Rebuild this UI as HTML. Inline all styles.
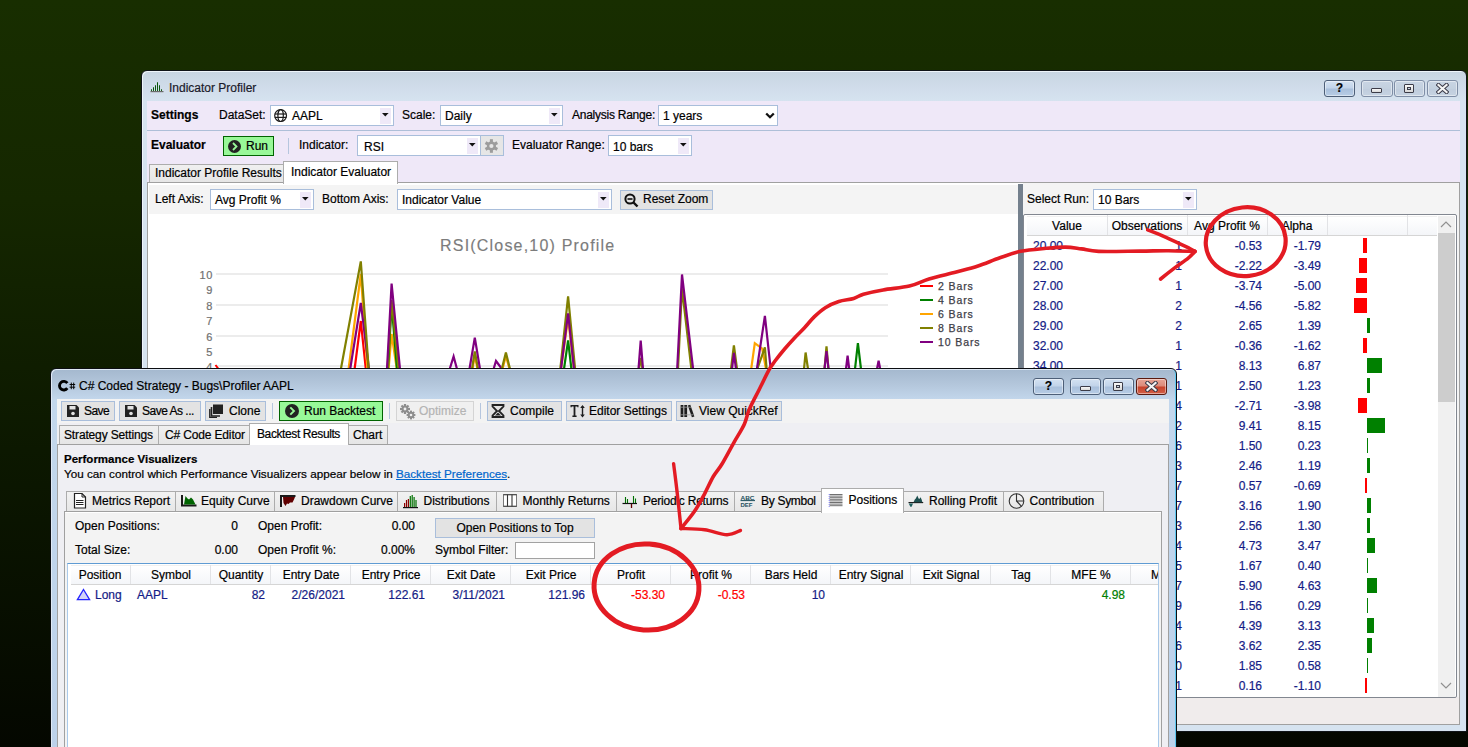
<!DOCTYPE html><html><head><meta charset="utf-8"><style>
html,body{margin:0;padding:0;}
body{width:1468px;height:747px;overflow:hidden;position:relative;background:linear-gradient(#182e00 0px,#152700 200px,#0c1800 450px,#040700 747px);font-family:"Liberation Sans",sans-serif;}
.a{position:absolute;}
.t{white-space:pre;-webkit-text-stroke:0.2px currentColor;}
</style></head><body>
<div class="a" style="left:141px;top:70px;width:1326px;height:662px;box-sizing:border-box;border:1px solid #101418;border-radius:6px 6px 0 0;background:linear-gradient(#c8d5e2 0px,#d0dcea 16px,#d6e3f0 31px,#d6e3f0 100%);box-shadow:inset 1px 1px 0 #eef4fa;"></div>
<svg class="a" style="left:150px;top:81px;" width="14" height="12" viewBox="0 0 14 12"><rect x="1" y="8" width="1" height="2" rx="0.5" fill="#0b560b"/><rect x="3" y="6" width="1" height="4" rx="0.5" fill="#0b560b"/><rect x="5" y="4" width="1" height="6" rx="0.5" fill="#0b560b"/><rect x="7" y="1" width="1" height="9" rx="0.5" fill="#0b560b"/><rect x="9" y="4" width="1" height="6" rx="0.5" fill="#0b560b"/><rect x="11" y="8" width="1" height="2" rx="0.5" fill="#0b560b"/><rect x="0.5" y="10" width="13" height="1.2" fill="#6c6c6c"/></svg>
<div class="a t" style="left:169px;top:81.84px;font-size:12px;line-height:12px;color:#1a1a2a;font-weight:normal;">Indicator Profiler</div>
<div class="a" style="left:1324px;top:80px;width:31px;height:17px;box-sizing:border-box;border:1px solid #4d5f78;border-radius:3px;background:linear-gradient(#d4e2f2 0%,#c2d4ea 45%,#a9c0dc 55%,#b8cde6 100%);box-shadow:inset 0 0 0 1px rgba(255,255,255,0.45);"></div>
<div class="a t" style="left:1324px;width:31px;text-align:center;top:81px;font-size:12px;line-height:15px;font-weight:bold;color:#000;">?</div>
<div class="a" style="left:1361px;top:80px;width:32px;height:17px;box-sizing:border-box;border:1px solid #7f8ea6;border-radius:3px;background:linear-gradient(#c9d5e3 0%,#c3d0df 50%,#c0cddd 55%,#c6d3e2 100%);box-shadow:inset 0 0 0 1px rgba(255,255,255,0.45);"></div>
<div class="a" style="left:1371px;top:88px;width:11px;height:5px;box-sizing:border-box;border:1px solid #3c3c48;background:linear-gradient(#f8f8f8,#d8d8d8);border-radius:1px;"></div>
<div class="a" style="left:1394px;top:80px;width:31px;height:17px;box-sizing:border-box;border:1px solid #7f8ea6;border-radius:3px;background:linear-gradient(#c9d5e3 0%,#c3d0df 50%,#c0cddd 55%,#c6d3e2 100%);box-shadow:inset 0 0 0 1px rgba(255,255,255,0.45);"></div>
<div class="a" style="left:1404px;top:84px;width:10px;height:9px;box-sizing:border-box;border:1.5px solid #3c3c48;background:linear-gradient(#f8f8f8,#d8d8d8);border-radius:1px;"></div>
<div class="a" style="left:1407px;top:87px;width:4px;height:3px;box-sizing:border-box;border:1px solid #3c3c48;background:#c9d6e4;"></div>
<div class="a" style="left:1427px;top:80px;width:31px;height:17px;box-sizing:border-box;border:1px solid #7f8ea6;border-radius:3px;background:linear-gradient(#c9d5e3 0%,#c3d0df 50%,#c0cddd 55%,#c6d3e2 100%);box-shadow:inset 0 0 0 1px rgba(255,255,255,0.45);"></div>
<svg class="a" style="left:1436px;top:83px;" width="13" height="11" viewBox="0 0 13 11"><path d="M2.5 2 L10.5 9 M10.5 2 L2.5 9" stroke="#3a3a48" stroke-width="4.2" stroke-linecap="square"/><path d="M2.5 2 L10.5 9 M10.5 2 L2.5 9" stroke="#f4f4f4" stroke-width="2.2" stroke-linecap="square"/></svg>
<div class="a" style="left:147px;top:101px;width:1313px;height:82px;background:#efe8f8;"></div>
<div class="a" style="left:147px;top:130px;width:1313px;height:1px;background:#aebfd8;"></div>
<div class="a t" style="left:151px;top:108.84px;font-size:12px;line-height:12px;color:#000;font-weight:bold;">Settings</div>
<div class="a t" style="left:219px;top:108.84px;font-size:12px;line-height:12px;color:#000;font-weight:normal;">DataSet:</div>
<div class="a" style="left:270px;top:105px;width:124px;height:21px;box-sizing:border-box;border:1px solid #a9bedb;background:#fff;"></div>
<div class="a" style="left:380px;top:108px;width:11px;height:16px;background:#efe9f8;"></div>
<svg class="a" style="left:382px;top:113px;" width="7" height="4" viewBox="0 0 7 4"><path d="M0 0 L6.6 0 L3.3 3.6 Z" fill="#111"/></svg>
<div class="a t" style="left:292px;top:109.84px;font-size:12px;line-height:12px;color:#000;font-weight:normal;">AAPL</div>
<svg class="a" style="left:274px;top:109px;" width="14" height="14" viewBox="0 0 14 14"><g fill="none" stroke="#1a1a1a" stroke-width="1.2"><circle cx="6.6" cy="6.6" r="5.9"/><ellipse cx="6.6" cy="6.6" rx="2.7" ry="5.9"/><line x1="0.8" y1="5" x2="12.4" y2="5"/><line x1="0.8" y1="8.4" x2="12.4" y2="8.4"/></g></svg>
<div class="a t" style="left:402px;top:108.84px;font-size:12px;line-height:12px;color:#000;font-weight:normal;">Scale:</div>
<div class="a" style="left:440px;top:105px;width:123px;height:21px;box-sizing:border-box;border:1px solid #a9bedb;background:#fff;"></div>
<div class="a" style="left:549px;top:108px;width:11px;height:16px;background:#efe9f8;"></div>
<svg class="a" style="left:551px;top:113px;" width="7" height="4" viewBox="0 0 7 4"><path d="M0 0 L6.6 0 L3.3 3.6 Z" fill="#111"/></svg>
<div class="a t" style="left:445px;top:109.84px;font-size:12px;line-height:12px;color:#000;font-weight:normal;">Daily</div>
<div class="a t" style="left:572px;top:108.84px;font-size:12px;line-height:12px;color:#000;font-weight:normal;letter-spacing:-0.25px;">Analysis Range:</div>
<div class="a" style="left:658px;top:105px;width:120px;height:21px;box-sizing:border-box;border:1px solid #a9bedb;background:#fff;"></div>
<svg class="a" style="left:765px;top:112px;" width="11" height="7" viewBox="0 0 11 7"><path d="M1.2 1.5 L5 5.2 L8.8 1.5" stroke="#111" stroke-width="2.3" fill="none"/></svg>
<div class="a t" style="left:663px;top:109.84px;font-size:12px;line-height:12px;color:#000;font-weight:normal;">1 years</div>
<div class="a t" style="left:151px;top:138.84px;font-size:12px;line-height:12px;color:#000;font-weight:bold;">Evaluator</div>
<div class="a" style="left:223px;top:136px;width:51px;height:20px;box-sizing:border-box;border:1px solid #006400;background:#98f898;"></div>
<svg class="a" style="left:228px;top:140px;" width="13" height="13" viewBox="0 0 13 13"><circle cx="6.5" cy="6.5" r="6.5" fill="#222"/><path d="M5 3 L8.5 6.5 L5 10" stroke="#98f898" stroke-width="1.8" fill="none"/></svg>
<div class="a t" style="left:246px;top:139.84px;font-size:12px;line-height:12px;color:#000;font-weight:normal;">Run</div>
<div class="a" style="left:288px;top:138px;width:1px;height:16px;background:#b6c6de;"></div>
<div class="a t" style="left:299px;top:138.84px;font-size:12px;line-height:12px;color:#000;font-weight:normal;">Indicator:</div>
<div class="a" style="left:357px;top:135px;width:124px;height:21px;box-sizing:border-box;border:1px solid #a9bedb;background:#fff;"></div>
<div class="a" style="left:467px;top:138px;width:11px;height:16px;background:#efe9f8;"></div>
<svg class="a" style="left:469px;top:143px;" width="7" height="4" viewBox="0 0 7 4"><path d="M0 0 L6.6 0 L3.3 3.6 Z" fill="#111"/></svg>
<div class="a t" style="left:364px;top:140.84px;font-size:12px;line-height:12px;color:#000;font-weight:normal;">RSI</div>
<div class="a" style="left:480px;top:135px;width:24px;height:21px;box-sizing:border-box;border:1px solid #a9bedb;background:#e6e6e6;"></div>
<svg class="a" style="left:484px;top:139px;" width="15" height="15" viewBox="0 0 15 15"><g fill="#9c9c9c"><circle cx="7.4" cy="7" r="4.6"/><rect x="5.9" y="0.2" width="3" height="3.6" transform="rotate(0 7.4 7)"/><rect x="5.9" y="0.2" width="3" height="3.6" transform="rotate(60 7.4 7)"/><rect x="5.9" y="0.2" width="3" height="3.6" transform="rotate(120 7.4 7)"/><rect x="5.9" y="0.2" width="3" height="3.6" transform="rotate(180 7.4 7)"/><rect x="5.9" y="0.2" width="3" height="3.6" transform="rotate(240 7.4 7)"/><rect x="5.9" y="0.2" width="3" height="3.6" transform="rotate(300 7.4 7)"/></g><circle cx="7.4" cy="7" r="2.1" fill="#e6e6e6"/></svg>
<div class="a t" style="left:512px;top:138.84px;font-size:12px;line-height:12px;color:#000;font-weight:normal;">Evaluator Range:</div>
<div class="a" style="left:608px;top:135px;width:84px;height:21px;box-sizing:border-box;border:1px solid #a9bedb;background:#fff;"></div>
<div class="a" style="left:678px;top:138px;width:11px;height:16px;background:#efe9f8;"></div>
<svg class="a" style="left:680px;top:143px;" width="7" height="4" viewBox="0 0 7 4"><path d="M0 0 L6.6 0 L3.3 3.6 Z" fill="#111"/></svg>
<div class="a t" style="left:613px;top:140.84px;font-size:12px;line-height:12px;color:#000;font-weight:normal;">10 bars</div>
<div class="a" style="left:149px;top:164px;width:135px;height:19px;box-sizing:border-box;border:1px solid #acacac;border-bottom:none;background:linear-gradient(#f0f0f0,#e5e5e5);"></div>
<div class="a t" style="left:155px;top:166.84px;font-size:12px;line-height:12px;color:#000;font-weight:normal;">Indicator Profile Results</div>
<div class="a" style="left:147px;top:182px;width:1313px;height:543px;box-sizing:border-box;border:1px solid #a0a0a0;background:#fff;"></div>
<div class="a" style="left:283px;top:161px;width:115px;height:23px;box-sizing:border-box;border:1px solid #acacac;border-bottom:none;background:#fff;"></div>
<div class="a t" style="left:291px;top:165.84px;font-size:12px;line-height:12px;color:#000;font-weight:normal;">Indicator Evaluator</div>
<div class="a" style="left:149px;top:185px;width:869px;height:29px;background:#f4f4f4;"></div>
<div class="a t" style="left:155px;top:192.84px;font-size:12px;line-height:12px;color:#000;font-weight:normal;">Left Axis:</div>
<div class="a" style="left:210px;top:189px;width:104px;height:21px;box-sizing:border-box;border:1px solid #a9bedb;background:#fff;"></div>
<div class="a" style="left:300px;top:192px;width:11px;height:16px;background:#efe9f8;"></div>
<svg class="a" style="left:302px;top:197px;" width="7" height="4" viewBox="0 0 7 4"><path d="M0 0 L6.6 0 L3.3 3.6 Z" fill="#111"/></svg>
<div class="a t" style="left:215px;top:193.84px;font-size:12px;line-height:12px;color:#000;font-weight:normal;">Avg Profit %</div>
<div class="a t" style="left:322px;top:192.84px;font-size:12px;line-height:12px;color:#000;font-weight:normal;">Bottom Axis:</div>
<div class="a" style="left:397px;top:189px;width:215px;height:21px;box-sizing:border-box;border:1px solid #a9bedb;background:#fff;"></div>
<div class="a" style="left:598px;top:192px;width:11px;height:16px;background:#efe9f8;"></div>
<svg class="a" style="left:600px;top:197px;" width="7" height="4" viewBox="0 0 7 4"><path d="M0 0 L6.6 0 L3.3 3.6 Z" fill="#111"/></svg>
<div class="a t" style="left:402px;top:193.84px;font-size:12px;line-height:12px;color:#000;font-weight:normal;">Indicator Value</div>
<div class="a" style="left:620px;top:190px;width:93px;height:20px;box-sizing:border-box;border:1px solid #a9bedb;background:#e3e3e3;"></div>
<svg class="a" style="left:624px;top:193px;" width="15" height="15" viewBox="0 0 15 15"><circle cx="6" cy="6" r="4.6" fill="none" stroke="#111" stroke-width="2"/><line x1="3.5" y1="6" x2="8.5" y2="6" stroke="#111" stroke-width="1.6"/><line x1="9.5" y1="9.5" x2="13.5" y2="13.5" stroke="#111" stroke-width="2.4"/></svg>
<div class="a t" style="left:643px;top:192.84px;font-size:12px;line-height:12px;color:#000;font-weight:normal;">Reset Zoom</div>
<div class="a" style="left:440px;top:238px;font-size:16px;line-height:16px;color:#7c7c7c;letter-spacing:1.2px;white-space:pre;-webkit-text-stroke:0.15px #7c7c7c;">RSI(Close,10) Profile</div>
<div class="a" style="left:216px;top:365px;width:672px;height:2px;background:#ececec;"></div>
<div class="a t" style="left:-187px;width:400px;text-align:right;top:361.69px;font-size:11px;line-height:11px;color:#707070;font-weight:normal;letter-spacing:0.6px;">4</div>
<div class="a t" style="left:-187px;width:400px;text-align:right;top:346.69px;font-size:11px;line-height:11px;color:#707070;font-weight:normal;letter-spacing:0.6px;">5</div>
<div class="a" style="left:216px;top:335px;width:672px;height:2px;background:#ececec;"></div>
<div class="a t" style="left:-187px;width:400px;text-align:right;top:331.69px;font-size:11px;line-height:11px;color:#707070;font-weight:normal;letter-spacing:0.6px;">6</div>
<div class="a t" style="left:-187px;width:400px;text-align:right;top:315.69px;font-size:11px;line-height:11px;color:#707070;font-weight:normal;letter-spacing:0.6px;">7</div>
<div class="a" style="left:216px;top:304px;width:672px;height:2px;background:#ececec;"></div>
<div class="a t" style="left:-187px;width:400px;text-align:right;top:300.69px;font-size:11px;line-height:11px;color:#707070;font-weight:normal;letter-spacing:0.6px;">8</div>
<div class="a t" style="left:-187px;width:400px;text-align:right;top:284.69px;font-size:11px;line-height:11px;color:#707070;font-weight:normal;letter-spacing:0.6px;">9</div>
<div class="a" style="left:216px;top:273px;width:672px;height:2px;background:#ececec;"></div>
<div class="a t" style="left:-187px;width:400px;text-align:right;top:269.69px;font-size:11px;line-height:11px;color:#707070;font-weight:normal;letter-spacing:0.6px;">10</div>
<svg class="a" style="left:0;top:0" width="1468" height="747"><polyline points="354.6,369 360.8,321 365.8,369" fill="none" stroke="#ff0000" stroke-width="2.2" stroke-linejoin="miter"/><polyline points="348.6,369 360.8,274 367.4,369" fill="none" stroke="#ffa500" stroke-width="2.2" stroke-linejoin="miter"/><polyline points="350.2,369 360.8,303 369,369" fill="none" stroke="#800080" stroke-width="2.2" stroke-linejoin="miter"/><polyline points="340.9,369 360.8,261.4 368.7,369" fill="none" stroke="#808000" stroke-width="2.2" stroke-linejoin="miter"/><polyline points="388.6,369 391.6,334 396.8,369" fill="none" stroke="#ffa500" stroke-width="2.2" stroke-linejoin="miter"/><polyline points="388,369 391.6,304 397,369" fill="none" stroke="#008000" stroke-width="2.2" stroke-linejoin="miter"/><polyline points="387.5,369 391.6,300 398.5,369" fill="none" stroke="#808000" stroke-width="2.2" stroke-linejoin="miter"/><polyline points="387,369 391.6,283.5 400,369" fill="none" stroke="#800080" stroke-width="2.2" stroke-linejoin="miter"/><polyline points="449.7,369 453.6,356.4 457,369" fill="none" stroke="#800080" stroke-width="2.2" stroke-linejoin="miter"/><polyline points="472.5,369 474.8,355 477.5,369" fill="none" stroke="#ffa500" stroke-width="2.2" stroke-linejoin="miter"/><polyline points="472,369 474.8,351.5 478,369" fill="none" stroke="#808000" stroke-width="2.2" stroke-linejoin="miter"/><polyline points="469.5,369 474.8,337.6 480,369" fill="none" stroke="#800080" stroke-width="2.2" stroke-linejoin="miter"/><polyline points="493.6,369 496,361 502,369" fill="none" stroke="#800080" stroke-width="2.2"/><polyline points="502.5,369 505.9,356 509.5,369" fill="none" stroke="#ffa500" stroke-width="2.2" stroke-linejoin="miter"/><polyline points="501.8,369 505.9,352.5 510,369" fill="none" stroke="#808000" stroke-width="2.2" stroke-linejoin="miter"/><polyline points="561,369 568.1,318 574,369" fill="none" stroke="#ffa500" stroke-width="2.2" stroke-linejoin="miter"/><polyline points="560.3,369 568.1,296.3 575.1,369" fill="none" stroke="#808000" stroke-width="2.2" stroke-linejoin="miter"/><polyline points="561,369 568.1,313.3 574,369" fill="none" stroke="#800080" stroke-width="2.2" stroke-linejoin="miter"/><polyline points="564,369 568.1,340.4 571.4,369" fill="none" stroke="#008000" stroke-width="2.2" stroke-linejoin="miter"/><polyline points="639,369 640.7,358 642.5,369" fill="none" stroke="#808000" stroke-width="2.2" stroke-linejoin="miter"/><polyline points="638.5,369 640.7,340.5 643,369" fill="none" stroke="#800080" stroke-width="2.2" stroke-linejoin="miter"/><polyline points="678,369 682,288.3 691.4,369" fill="none" stroke="#808000" stroke-width="2.2" stroke-linejoin="miter"/><polyline points="677.2,369 682,274.5 693.1,369" fill="none" stroke="#800080" stroke-width="2.2" stroke-linejoin="miter"/><polyline points="731,369 733.9,345.4 737,369" fill="none" stroke="#808000" stroke-width="2.2" stroke-linejoin="miter"/><polyline points="732,369 733.9,353 736,369" fill="none" stroke="#800080" stroke-width="2.2" stroke-linejoin="miter"/><polyline points="751.2,369 754.8,343.2 762.2,348.6 766,369" fill="none" stroke="#ffa500" stroke-width="2.2"/><polyline points="757.3,369 764.9,347.3 766.6,369" fill="none" stroke="#808000" stroke-width="2.2" stroke-linejoin="miter"/><polyline points="756.9,369 764.9,315.8 770.7,369" fill="none" stroke="#800080" stroke-width="2.2" stroke-linejoin="miter"/><polyline points="804,369 805.6,352.5 808,369" fill="none" stroke="#808000" stroke-width="2.2" stroke-linejoin="miter"/><polyline points="824.5,369 826.5,346.4 828.5,369" fill="none" stroke="#808000" stroke-width="2.2" stroke-linejoin="miter"/><polyline points="824.5,369 826.5,351.2 828.5,369" fill="none" stroke="#800080" stroke-width="2.2" stroke-linejoin="miter"/><polyline points="846,369 847.6,355.6 849.2,369" fill="none" stroke="#800080" stroke-width="2.2" stroke-linejoin="miter"/><polyline points="855,369 857.9,343.2 861,369" fill="none" stroke="#008000" stroke-width="2.2" stroke-linejoin="miter"/><polyline points="877,369 878.6,360.6 880.2,369" fill="none" stroke="#800080" stroke-width="2.2" stroke-linejoin="miter"/><polyline points="215.5,365 218.5,369" fill="none" stroke="#ff0000" stroke-width="2"/></svg>
<div class="a" style="left:920px;top:285px;width:13px;height:2px;background:#ff0000;"></div>
<div class="a t" style="left:938px;top:281.11px;font-size:10.5px;line-height:10.5px;color:#404048;font-weight:normal;letter-spacing:0.9px;-webkit-text-stroke:0.25px #404048;">2 Bars</div>
<div class="a" style="left:920px;top:299px;width:13px;height:2px;background:#008000;"></div>
<div class="a t" style="left:938px;top:295.11px;font-size:10.5px;line-height:10.5px;color:#404048;font-weight:normal;letter-spacing:0.9px;-webkit-text-stroke:0.25px #404048;">4 Bars</div>
<div class="a" style="left:920px;top:313px;width:13px;height:2px;background:#ffa500;"></div>
<div class="a t" style="left:938px;top:309.11px;font-size:10.5px;line-height:10.5px;color:#404048;font-weight:normal;letter-spacing:0.9px;-webkit-text-stroke:0.25px #404048;">6 Bars</div>
<div class="a" style="left:920px;top:327px;width:13px;height:2px;background:#808000;"></div>
<div class="a t" style="left:938px;top:323.11px;font-size:10.5px;line-height:10.5px;color:#404048;font-weight:normal;letter-spacing:0.9px;-webkit-text-stroke:0.25px #404048;">8 Bars</div>
<div class="a" style="left:920px;top:341px;width:13px;height:2px;background:#800080;"></div>
<div class="a t" style="left:938px;top:337.11px;font-size:10.5px;line-height:10.5px;color:#404048;font-weight:normal;letter-spacing:0.9px;-webkit-text-stroke:0.25px #404048;">10 Bars</div>
<div class="a" style="left:1018px;top:184px;width:5px;height:540px;background:#74808d;"></div>
<div class="a" style="left:1023px;top:183px;width:436px;height:541px;background:#f4f4f4;"></div>
<div class="a" style="left:1023px;top:697px;width:436px;height:27px;background:#f0ecec;"></div>
<div class="a t" style="left:1027px;top:192.84px;font-size:12px;line-height:12px;color:#000;font-weight:normal;">Select Run:</div>
<div class="a" style="left:1093px;top:189px;width:104px;height:21px;box-sizing:border-box;border:1px solid #a9bedb;background:#fff;"></div>
<div class="a" style="left:1183px;top:192px;width:11px;height:16px;background:#efe9f8;"></div>
<svg class="a" style="left:1185px;top:197px;" width="7" height="4" viewBox="0 0 7 4"><path d="M0 0 L6.6 0 L3.3 3.6 Z" fill="#111"/></svg>
<div class="a t" style="left:1098px;top:193.84px;font-size:12px;line-height:12px;color:#000;font-weight:normal;">10 Bars</div>
<div class="a" style="left:1023px;top:214px;width:434px;height:484px;box-sizing:border-box;border:1px solid #828790;background:#fff;border-radius:2px;"></div>
<div class="a" style="left:1027px;top:216px;width:410px;height:20px;background:linear-gradient(#ffffff,#f3f5f8);border-top:1px solid #f0f0f0;box-sizing:border-box;"></div>
<div class="a" style="left:1027px;top:235px;width:410px;height:1px;background:#d5d5d5;"></div>
<div class="a" style="left:1107px;top:215px;width:1px;height:20px;background:#e2e3e6;"></div>
<div class="a" style="left:1187px;top:215px;width:1px;height:20px;background:#e2e3e6;"></div>
<div class="a" style="left:1267px;top:215px;width:1px;height:20px;background:#e2e3e6;"></div>
<div class="a" style="left:1327px;top:215px;width:1px;height:20px;background:#e2e3e6;"></div>
<div class="a" style="left:1407px;top:215px;width:1px;height:20px;background:#e2e3e6;"></div>
<div class="a t" style="left:767px;width:600px;text-align:center;top:219.84px;font-size:12px;line-height:12px;color:#000;font-weight:normal;">Value</div>
<div class="a t" style="left:847px;width:600px;text-align:center;top:219.84px;font-size:12px;line-height:12px;color:#000;font-weight:normal;">Observations</div>
<div class="a t" style="left:927px;width:600px;text-align:center;top:219.84px;font-size:12px;line-height:12px;color:#000;font-weight:normal;">Avg Profit %</div>
<div class="a t" style="left:997px;width:600px;text-align:center;top:219.84px;font-size:12px;line-height:12px;color:#000;font-weight:normal;">Alpha</div>
<div class="a" style="left:1438px;top:216px;width:17px;height:481px;background:#f0f0f0;"></div>
<div class="a" style="left:1438px;top:233px;width:17px;height:169px;background:#cdcdcd;"></div>
<svg class="a" style="left:1440px;top:220px;" width="12" height="8" viewBox="0 0 12 8"><path d="M1 7 L6 2 L11 7" stroke="#909090" stroke-width="1.2" fill="none"/></svg>
<svg class="a" style="left:1440px;top:682px;" width="12" height="8" viewBox="0 0 12 8"><path d="M1 1 L6 6 L11 1" stroke="#909090" stroke-width="1.2" fill="none"/></svg>
<div class="a t" style="left:1033px;top:239.84px;font-size:12px;line-height:12px;color:#141c86;font-weight:normal;">20.00</div>
<div class="a t" style="left:782px;width:400px;text-align:right;top:239.84px;font-size:12px;line-height:12px;color:#141c86;font-weight:normal;">1</div>
<div class="a t" style="left:862px;width:400px;text-align:right;top:239.84px;font-size:12px;line-height:12px;color:#141c86;font-weight:normal;">-0.53</div>
<div class="a t" style="left:921px;width:400px;text-align:right;top:239.84px;font-size:12px;line-height:12px;color:#141c86;font-weight:normal;">-1.79</div>
<div class="a" style="left:1363px;top:238px;width:4px;height:15px;background:#ff0000;"></div>
<div class="a t" style="left:1033px;top:259.84px;font-size:12px;line-height:12px;color:#141c86;font-weight:normal;">22.00</div>
<div class="a t" style="left:782px;width:400px;text-align:right;top:259.84px;font-size:12px;line-height:12px;color:#141c86;font-weight:normal;">1</div>
<div class="a t" style="left:862px;width:400px;text-align:right;top:259.84px;font-size:12px;line-height:12px;color:#141c86;font-weight:normal;">-2.22</div>
<div class="a t" style="left:921px;width:400px;text-align:right;top:259.84px;font-size:12px;line-height:12px;color:#141c86;font-weight:normal;">-3.49</div>
<div class="a" style="left:1359px;top:258px;width:8px;height:15px;background:#ff0000;"></div>
<div class="a t" style="left:1033px;top:279.84px;font-size:12px;line-height:12px;color:#141c86;font-weight:normal;">27.00</div>
<div class="a t" style="left:782px;width:400px;text-align:right;top:279.84px;font-size:12px;line-height:12px;color:#141c86;font-weight:normal;">1</div>
<div class="a t" style="left:862px;width:400px;text-align:right;top:279.84px;font-size:12px;line-height:12px;color:#141c86;font-weight:normal;">-3.74</div>
<div class="a t" style="left:921px;width:400px;text-align:right;top:279.84px;font-size:12px;line-height:12px;color:#141c86;font-weight:normal;">-5.00</div>
<div class="a" style="left:1356px;top:278px;width:11px;height:15px;background:#ff0000;"></div>
<div class="a t" style="left:1033px;top:299.84px;font-size:12px;line-height:12px;color:#141c86;font-weight:normal;">28.00</div>
<div class="a t" style="left:782px;width:400px;text-align:right;top:299.84px;font-size:12px;line-height:12px;color:#141c86;font-weight:normal;">2</div>
<div class="a t" style="left:862px;width:400px;text-align:right;top:299.84px;font-size:12px;line-height:12px;color:#141c86;font-weight:normal;">-4.56</div>
<div class="a t" style="left:921px;width:400px;text-align:right;top:299.84px;font-size:12px;line-height:12px;color:#141c86;font-weight:normal;">-5.82</div>
<div class="a" style="left:1354px;top:298px;width:13px;height:15px;background:#ff0000;"></div>
<div class="a t" style="left:1033px;top:319.84px;font-size:12px;line-height:12px;color:#141c86;font-weight:normal;">29.00</div>
<div class="a t" style="left:782px;width:400px;text-align:right;top:319.84px;font-size:12px;line-height:12px;color:#141c86;font-weight:normal;">2</div>
<div class="a t" style="left:862px;width:400px;text-align:right;top:319.84px;font-size:12px;line-height:12px;color:#141c86;font-weight:normal;">2.65</div>
<div class="a t" style="left:921px;width:400px;text-align:right;top:319.84px;font-size:12px;line-height:12px;color:#141c86;font-weight:normal;">1.39</div>
<div class="a" style="left:1367px;top:318px;width:3px;height:15px;background:#008000;"></div>
<div class="a t" style="left:1033px;top:339.84px;font-size:12px;line-height:12px;color:#141c86;font-weight:normal;">32.00</div>
<div class="a t" style="left:782px;width:400px;text-align:right;top:339.84px;font-size:12px;line-height:12px;color:#141c86;font-weight:normal;">1</div>
<div class="a t" style="left:862px;width:400px;text-align:right;top:339.84px;font-size:12px;line-height:12px;color:#141c86;font-weight:normal;">-0.36</div>
<div class="a t" style="left:921px;width:400px;text-align:right;top:339.84px;font-size:12px;line-height:12px;color:#141c86;font-weight:normal;">-1.62</div>
<div class="a" style="left:1363px;top:338px;width:4px;height:15px;background:#ff0000;"></div>
<div class="a t" style="left:1033px;top:359.84px;font-size:12px;line-height:12px;color:#141c86;font-weight:normal;">34.00</div>
<div class="a t" style="left:782px;width:400px;text-align:right;top:359.84px;font-size:12px;line-height:12px;color:#141c86;font-weight:normal;">1</div>
<div class="a t" style="left:862px;width:400px;text-align:right;top:359.84px;font-size:12px;line-height:12px;color:#141c86;font-weight:normal;">8.13</div>
<div class="a t" style="left:921px;width:400px;text-align:right;top:359.84px;font-size:12px;line-height:12px;color:#141c86;font-weight:normal;">6.87</div>
<div class="a" style="left:1367px;top:358px;width:15px;height:15px;background:#008000;"></div>
<div class="a t" style="left:1033px;top:379.84px;font-size:12px;line-height:12px;color:#141c86;font-weight:normal;">35.00</div>
<div class="a t" style="left:782px;width:400px;text-align:right;top:379.84px;font-size:12px;line-height:12px;color:#141c86;font-weight:normal;">1</div>
<div class="a t" style="left:862px;width:400px;text-align:right;top:379.84px;font-size:12px;line-height:12px;color:#141c86;font-weight:normal;">2.50</div>
<div class="a t" style="left:921px;width:400px;text-align:right;top:379.84px;font-size:12px;line-height:12px;color:#141c86;font-weight:normal;">1.23</div>
<div class="a" style="left:1367px;top:378px;width:3px;height:15px;background:#008000;"></div>
<div class="a t" style="left:1033px;top:399.84px;font-size:12px;line-height:12px;color:#141c86;font-weight:normal;">36.00</div>
<div class="a t" style="left:782px;width:400px;text-align:right;top:399.84px;font-size:12px;line-height:12px;color:#141c86;font-weight:normal;">4</div>
<div class="a t" style="left:862px;width:400px;text-align:right;top:399.84px;font-size:12px;line-height:12px;color:#141c86;font-weight:normal;">-2.71</div>
<div class="a t" style="left:921px;width:400px;text-align:right;top:399.84px;font-size:12px;line-height:12px;color:#141c86;font-weight:normal;">-3.98</div>
<div class="a" style="left:1358px;top:398px;width:9px;height:15px;background:#ff0000;"></div>
<div class="a t" style="left:1033px;top:419.84px;font-size:12px;line-height:12px;color:#141c86;font-weight:normal;">37.00</div>
<div class="a t" style="left:782px;width:400px;text-align:right;top:419.84px;font-size:12px;line-height:12px;color:#141c86;font-weight:normal;">2</div>
<div class="a t" style="left:862px;width:400px;text-align:right;top:419.84px;font-size:12px;line-height:12px;color:#141c86;font-weight:normal;">9.41</div>
<div class="a t" style="left:921px;width:400px;text-align:right;top:419.84px;font-size:12px;line-height:12px;color:#141c86;font-weight:normal;">8.15</div>
<div class="a" style="left:1367px;top:418px;width:18px;height:15px;background:#008000;"></div>
<div class="a t" style="left:1033px;top:439.84px;font-size:12px;line-height:12px;color:#141c86;font-weight:normal;">38.00</div>
<div class="a t" style="left:782px;width:400px;text-align:right;top:439.84px;font-size:12px;line-height:12px;color:#141c86;font-weight:normal;">6</div>
<div class="a t" style="left:862px;width:400px;text-align:right;top:439.84px;font-size:12px;line-height:12px;color:#141c86;font-weight:normal;">1.50</div>
<div class="a t" style="left:921px;width:400px;text-align:right;top:439.84px;font-size:12px;line-height:12px;color:#141c86;font-weight:normal;">0.23</div>
<div class="a" style="left:1367px;top:438px;width:1px;height:15px;background:#008000;"></div>
<div class="a t" style="left:1033px;top:459.84px;font-size:12px;line-height:12px;color:#141c86;font-weight:normal;">39.00</div>
<div class="a t" style="left:782px;width:400px;text-align:right;top:459.84px;font-size:12px;line-height:12px;color:#141c86;font-weight:normal;">3</div>
<div class="a t" style="left:862px;width:400px;text-align:right;top:459.84px;font-size:12px;line-height:12px;color:#141c86;font-weight:normal;">2.46</div>
<div class="a t" style="left:921px;width:400px;text-align:right;top:459.84px;font-size:12px;line-height:12px;color:#141c86;font-weight:normal;">1.19</div>
<div class="a" style="left:1367px;top:458px;width:3px;height:15px;background:#008000;"></div>
<div class="a t" style="left:1033px;top:479.84px;font-size:12px;line-height:12px;color:#141c86;font-weight:normal;">40.00</div>
<div class="a t" style="left:782px;width:400px;text-align:right;top:479.84px;font-size:12px;line-height:12px;color:#141c86;font-weight:normal;">7</div>
<div class="a t" style="left:862px;width:400px;text-align:right;top:479.84px;font-size:12px;line-height:12px;color:#141c86;font-weight:normal;">0.57</div>
<div class="a t" style="left:921px;width:400px;text-align:right;top:479.84px;font-size:12px;line-height:12px;color:#141c86;font-weight:normal;">-0.69</div>
<div class="a" style="left:1365px;top:478px;width:2px;height:15px;background:#ff0000;"></div>
<div class="a t" style="left:1033px;top:499.84px;font-size:12px;line-height:12px;color:#141c86;font-weight:normal;">41.00</div>
<div class="a t" style="left:782px;width:400px;text-align:right;top:499.84px;font-size:12px;line-height:12px;color:#141c86;font-weight:normal;">7</div>
<div class="a t" style="left:862px;width:400px;text-align:right;top:499.84px;font-size:12px;line-height:12px;color:#141c86;font-weight:normal;">3.16</div>
<div class="a t" style="left:921px;width:400px;text-align:right;top:499.84px;font-size:12px;line-height:12px;color:#141c86;font-weight:normal;">1.90</div>
<div class="a" style="left:1367px;top:498px;width:4px;height:15px;background:#008000;"></div>
<div class="a t" style="left:1033px;top:519.84px;font-size:12px;line-height:12px;color:#141c86;font-weight:normal;">42.00</div>
<div class="a t" style="left:782px;width:400px;text-align:right;top:519.84px;font-size:12px;line-height:12px;color:#141c86;font-weight:normal;">3</div>
<div class="a t" style="left:862px;width:400px;text-align:right;top:519.84px;font-size:12px;line-height:12px;color:#141c86;font-weight:normal;">2.56</div>
<div class="a t" style="left:921px;width:400px;text-align:right;top:519.84px;font-size:12px;line-height:12px;color:#141c86;font-weight:normal;">1.30</div>
<div class="a" style="left:1367px;top:518px;width:3px;height:15px;background:#008000;"></div>
<div class="a t" style="left:1033px;top:539.84px;font-size:12px;line-height:12px;color:#141c86;font-weight:normal;">43.00</div>
<div class="a t" style="left:782px;width:400px;text-align:right;top:539.84px;font-size:12px;line-height:12px;color:#141c86;font-weight:normal;">4</div>
<div class="a t" style="left:862px;width:400px;text-align:right;top:539.84px;font-size:12px;line-height:12px;color:#141c86;font-weight:normal;">4.73</div>
<div class="a t" style="left:921px;width:400px;text-align:right;top:539.84px;font-size:12px;line-height:12px;color:#141c86;font-weight:normal;">3.47</div>
<div class="a" style="left:1367px;top:538px;width:8px;height:15px;background:#008000;"></div>
<div class="a t" style="left:1033px;top:559.84px;font-size:12px;line-height:12px;color:#141c86;font-weight:normal;">44.00</div>
<div class="a t" style="left:782px;width:400px;text-align:right;top:559.84px;font-size:12px;line-height:12px;color:#141c86;font-weight:normal;">5</div>
<div class="a t" style="left:862px;width:400px;text-align:right;top:559.84px;font-size:12px;line-height:12px;color:#141c86;font-weight:normal;">1.67</div>
<div class="a t" style="left:921px;width:400px;text-align:right;top:559.84px;font-size:12px;line-height:12px;color:#141c86;font-weight:normal;">0.40</div>
<div class="a" style="left:1367px;top:558px;width:1px;height:15px;background:#008000;"></div>
<div class="a t" style="left:1033px;top:579.84px;font-size:12px;line-height:12px;color:#141c86;font-weight:normal;">45.00</div>
<div class="a t" style="left:782px;width:400px;text-align:right;top:579.84px;font-size:12px;line-height:12px;color:#141c86;font-weight:normal;">7</div>
<div class="a t" style="left:862px;width:400px;text-align:right;top:579.84px;font-size:12px;line-height:12px;color:#141c86;font-weight:normal;">5.90</div>
<div class="a t" style="left:921px;width:400px;text-align:right;top:579.84px;font-size:12px;line-height:12px;color:#141c86;font-weight:normal;">4.63</div>
<div class="a" style="left:1367px;top:578px;width:10px;height:15px;background:#008000;"></div>
<div class="a t" style="left:1033px;top:599.84px;font-size:12px;line-height:12px;color:#141c86;font-weight:normal;">46.00</div>
<div class="a t" style="left:782px;width:400px;text-align:right;top:599.84px;font-size:12px;line-height:12px;color:#141c86;font-weight:normal;">9</div>
<div class="a t" style="left:862px;width:400px;text-align:right;top:599.84px;font-size:12px;line-height:12px;color:#141c86;font-weight:normal;">1.56</div>
<div class="a t" style="left:921px;width:400px;text-align:right;top:599.84px;font-size:12px;line-height:12px;color:#141c86;font-weight:normal;">0.29</div>
<div class="a" style="left:1367px;top:598px;width:1px;height:15px;background:#008000;"></div>
<div class="a t" style="left:1033px;top:619.84px;font-size:12px;line-height:12px;color:#141c86;font-weight:normal;">47.00</div>
<div class="a t" style="left:782px;width:400px;text-align:right;top:619.84px;font-size:12px;line-height:12px;color:#141c86;font-weight:normal;">4</div>
<div class="a t" style="left:862px;width:400px;text-align:right;top:619.84px;font-size:12px;line-height:12px;color:#141c86;font-weight:normal;">4.39</div>
<div class="a t" style="left:921px;width:400px;text-align:right;top:619.84px;font-size:12px;line-height:12px;color:#141c86;font-weight:normal;">3.13</div>
<div class="a" style="left:1367px;top:618px;width:7px;height:15px;background:#008000;"></div>
<div class="a t" style="left:1033px;top:639.84px;font-size:12px;line-height:12px;color:#141c86;font-weight:normal;">48.00</div>
<div class="a t" style="left:782px;width:400px;text-align:right;top:639.84px;font-size:12px;line-height:12px;color:#141c86;font-weight:normal;">6</div>
<div class="a t" style="left:862px;width:400px;text-align:right;top:639.84px;font-size:12px;line-height:12px;color:#141c86;font-weight:normal;">3.62</div>
<div class="a t" style="left:921px;width:400px;text-align:right;top:639.84px;font-size:12px;line-height:12px;color:#141c86;font-weight:normal;">2.35</div>
<div class="a" style="left:1367px;top:638px;width:5px;height:15px;background:#008000;"></div>
<div class="a t" style="left:1033px;top:659.84px;font-size:12px;line-height:12px;color:#141c86;font-weight:normal;">49.00</div>
<div class="a t" style="left:782px;width:400px;text-align:right;top:659.84px;font-size:12px;line-height:12px;color:#141c86;font-weight:normal;">0</div>
<div class="a t" style="left:862px;width:400px;text-align:right;top:659.84px;font-size:12px;line-height:12px;color:#141c86;font-weight:normal;">1.85</div>
<div class="a t" style="left:921px;width:400px;text-align:right;top:659.84px;font-size:12px;line-height:12px;color:#141c86;font-weight:normal;">0.58</div>
<div class="a" style="left:1367px;top:658px;width:1px;height:15px;background:#008000;"></div>
<div class="a t" style="left:1033px;top:679.84px;font-size:12px;line-height:12px;color:#141c86;font-weight:normal;">50.00</div>
<div class="a t" style="left:782px;width:400px;text-align:right;top:679.84px;font-size:12px;line-height:12px;color:#141c86;font-weight:normal;">1</div>
<div class="a t" style="left:862px;width:400px;text-align:right;top:679.84px;font-size:12px;line-height:12px;color:#141c86;font-weight:normal;">0.16</div>
<div class="a t" style="left:921px;width:400px;text-align:right;top:679.84px;font-size:12px;line-height:12px;color:#141c86;font-weight:normal;">-1.10</div>
<div class="a" style="left:1365px;top:678px;width:2px;height:15px;background:#ff0000;"></div>
<div class="a" style="left:50px;top:368px;width:1127px;height:400px;box-sizing:border-box;border:1px solid #0c0e12;border-radius:6px 6px 0 0;background:linear-gradient(#a4b8ce 0px,#b3c6db 15px,#c3d7ec 31px,#bcd1ea 100%);box-shadow:inset 1px 1px 0 #dfe9f5, inset -1px 0 0 #5ec8f0;"></div>
<svg class="a" style="left:57px;top:379px;" width="20" height="14" viewBox="0 0 20 14"><path d="M10.3 4.2 A4.3 4.3 0 1 0 10.3 9.2" fill="none" stroke="#000" stroke-width="2.9"/><path d="M14.3 3.6 V10.2 M16.7 3.6 V10.2 M12.6 5.5 H18.2 M12.6 8.2 H18.2" stroke="#000" stroke-width="0.95"/></svg>
<div class="a t" style="left:79px;top:379.84px;font-size:12px;line-height:12px;color:#000;font-weight:normal;">C# Coded Strategy - Bugs\Profiler AAPL</div>
<div class="a" style="left:1033px;top:378px;width:31px;height:17px;box-sizing:border-box;border:1px solid #4d5f78;border-radius:3px;background:linear-gradient(#d4e2f2 0%,#c2d4ea 45%,#a9c0dc 55%,#b8cde6 100%);box-shadow:inset 0 0 0 1px rgba(255,255,255,0.45);"></div>
<div class="a t" style="left:1033px;width:31px;text-align:center;top:379px;font-size:12px;line-height:15px;font-weight:bold;color:#000;">?</div>
<div class="a" style="left:1070px;top:378px;width:31px;height:17px;box-sizing:border-box;border:1px solid #4d5f78;border-radius:3px;background:linear-gradient(#d4e2f2 0%,#c2d4ea 45%,#a9c0dc 55%,#b8cde6 100%);box-shadow:inset 0 0 0 1px rgba(255,255,255,0.45);"></div>
<div class="a" style="left:1080px;top:386px;width:11px;height:5px;box-sizing:border-box;border:1px solid #3c3c48;background:linear-gradient(#f8f8f8,#d8d8d8);border-radius:1px;"></div>
<div class="a" style="left:1103px;top:378px;width:31px;height:17px;box-sizing:border-box;border:1px solid #4d5f78;border-radius:3px;background:linear-gradient(#d4e2f2 0%,#c2d4ea 45%,#a9c0dc 55%,#b8cde6 100%);box-shadow:inset 0 0 0 1px rgba(255,255,255,0.45);"></div>
<div class="a" style="left:1113px;top:382px;width:10px;height:9px;box-sizing:border-box;border:1.5px solid #3c3c48;background:linear-gradient(#f8f8f8,#d8d8d8);border-radius:1px;"></div>
<div class="a" style="left:1116px;top:385px;width:4px;height:3px;box-sizing:border-box;border:1px solid #3c3c48;background:#c9d6e4;"></div>
<div class="a" style="left:1136px;top:378px;width:31px;height:17px;box-sizing:border-box;border:1px solid #5a1a10;border-radius:3px;background:linear-gradient(#e8a496 0%,#dc8b7b 45%,#c8432c 55%,#d26048 100%);box-shadow:inset 0 0 0 1px rgba(255,255,255,0.45);"></div>
<svg class="a" style="left:1145px;top:381px;" width="13" height="11" viewBox="0 0 13 11"><path d="M2.5 2 L10.5 9 M10.5 2 L2.5 9" stroke="#3a3a48" stroke-width="4.2" stroke-linecap="square"/><path d="M2.5 2 L10.5 9 M10.5 2 L2.5 9" stroke="#f4f4f4" stroke-width="2.2" stroke-linecap="square"/></svg>
<div class="a" style="left:57px;top:399px;width:1112px;height:400px;background:#efeff3;"></div>
<div class="a" style="left:57px;top:399px;width:1112px;height:24px;background:#f3f3f3;"></div>
<div class="a" style="left:61px;top:401px;width:54px;height:20px;box-sizing:border-box;border:1px solid #a9bedb;background:#e3e3e3;"></div>
<svg class="a" style="left:66px;top:404px" width="14" height="14" viewBox="0 0 14 14"><path d="M1 1 H10.5 L13 3.5 V13 H1 Z" fill="#222"/><rect x="3.5" y="2" width="6" height="3.5" fill="#e3e3e3"/><circle cx="7" cy="9.5" r="1.8" fill="#e3e3e3"/></svg>
<div class="a t" style="left:84px;top:404.84px;font-size:12px;line-height:12px;color:#000;font-weight:normal;"><span style="letter-spacing:-0.6px">Save</span></div>
<div class="a" style="left:119px;top:401px;width:82px;height:20px;box-sizing:border-box;border:1px solid #a9bedb;background:#e3e3e3;"></div>
<svg class="a" style="left:124px;top:404px" width="14" height="14" viewBox="0 0 14 14"><path d="M1 1 H10.5 L13 3.5 V13 H1 Z" fill="#222"/><rect x="3.5" y="2" width="6" height="3.5" fill="#e3e3e3"/><circle cx="7" cy="9.5" r="1.8" fill="#e3e3e3"/></svg>
<div class="a t" style="left:142px;top:404.84px;font-size:12px;line-height:12px;color:#000;font-weight:normal;"><span style="letter-spacing:-0.5px">Save As ...</span></div>
<div class="a" style="left:205px;top:401px;width:61px;height:20px;box-sizing:border-box;border:1px solid #a9bedb;background:#e3e3e3;"></div>
<svg class="a" style="left:209px;top:404px" width="15" height="14" viewBox="0 0 15 14"><rect x="4" y="0.5" width="10" height="9.5" fill="#222"/><path d="M2.5 3 V12 H11" stroke="#222" stroke-width="1.6" fill="none"/><path d="M0.8 5 V13.5 H8" stroke="#222" stroke-width="1.4" fill="none"/></svg>
<div class="a t" style="left:229px;top:404.84px;font-size:12px;line-height:12px;color:#000;font-weight:normal;">Clone</div>
<div class="a" style="left:272px;top:403px;width:1px;height:16px;background:#b6c6de;"></div>
<div class="a" style="left:279px;top:401px;width:104px;height:20px;box-sizing:border-box;border:1px solid #006400;background:#98f898;"></div>
<svg class="a" style="left:285px;top:404px" width="14" height="14" viewBox="0 0 14 14"><circle cx="7" cy="7" r="7" fill="#222"/><path d="M5.3 3.3 L9 7 L5.3 10.7" stroke="#98f898" stroke-width="1.9" fill="none"/></svg>
<div class="a t" style="left:304px;top:404.84px;font-size:12px;line-height:12px;color:#000;font-weight:normal;">Run Backtest</div>
<div class="a" style="left:389px;top:403px;width:1px;height:16px;background:#b6c6de;"></div>
<div class="a" style="left:396px;top:401px;width:78px;height:20px;box-sizing:border-box;border:1px solid #d4d4d4;background:#f0f0f0;"></div>
<svg class="a" style="left:400px;top:404px" width="16" height="16" viewBox="0 0 16 16"><g fill="#8e8e8e"><circle cx="5" cy="5" r="3.4"/><rect x="3.9" y="0" width="2.2" height="3" transform="rotate(0 5 5)"/><rect x="3.9" y="0" width="2.2" height="3" transform="rotate(45 5 5)"/><rect x="3.9" y="0" width="2.2" height="3" transform="rotate(90 5 5)"/><rect x="3.9" y="0" width="2.2" height="3" transform="rotate(135 5 5)"/><rect x="3.9" y="0" width="2.2" height="3" transform="rotate(180 5 5)"/><rect x="3.9" y="0" width="2.2" height="3" transform="rotate(225 5 5)"/><rect x="3.9" y="0" width="2.2" height="3" transform="rotate(270 5 5)"/><rect x="3.9" y="0" width="2.2" height="3" transform="rotate(315 5 5)"/><circle cx="11" cy="11" r="3.2"/><rect x="10" y="6.6" width="2" height="2.6" transform="rotate(0 11 11)"/><rect x="10" y="6.6" width="2" height="2.6" transform="rotate(45 11 11)"/><rect x="10" y="6.6" width="2" height="2.6" transform="rotate(90 11 11)"/><rect x="10" y="6.6" width="2" height="2.6" transform="rotate(135 11 11)"/><rect x="10" y="6.6" width="2" height="2.6" transform="rotate(180 11 11)"/><rect x="10" y="6.6" width="2" height="2.6" transform="rotate(225 11 11)"/><rect x="10" y="6.6" width="2" height="2.6" transform="rotate(270 11 11)"/><rect x="10" y="6.6" width="2" height="2.6" transform="rotate(315 11 11)"/></g><circle cx="5" cy="5" r="1.4" fill="#f0f0f0"/><circle cx="11" cy="11" r="1.3" fill="#f0f0f0"/></svg>
<div class="a t" style="left:419px;top:404.84px;font-size:12px;line-height:12px;color:#b4b4b4;font-weight:normal;">Optimize</div>
<div class="a" style="left:480px;top:403px;width:1px;height:16px;background:#b6c6de;"></div>
<div class="a" style="left:487px;top:401px;width:75px;height:20px;box-sizing:border-box;border:1px solid #a9bedb;background:#e3e3e3;"></div>
<svg class="a" style="left:491px;top:404px" width="14" height="14" viewBox="0 0 14 14"><path d="M1.5 1 H12.5 V2.5 L8 7 L12.5 11.5 V13 H1.5 V11.5 L6 7 L1.5 2.5 Z" fill="none" stroke="#222" stroke-width="1.8"/><path d="M4 11.5 L7 8.5 L10 11.5 Z" fill="#222"/></svg>
<div class="a t" style="left:510px;top:404.84px;font-size:12px;line-height:12px;color:#000;font-weight:normal;">Compile</div>
<div class="a" style="left:566px;top:401px;width:106px;height:20px;box-sizing:border-box;border:1px solid #a9bedb;background:#e3e3e3;"></div>
<svg class="a" style="left:569px;top:404px" width="18" height="15" viewBox="0 0 18 15"><path d="M1.5 1 H9.5 V3.2 H8.3 V2.4 H6.4 V11.6 H7.6 V13 H3.4 V11.6 H4.6 V2.4 H2.7 V3.2 H1.5 Z" fill="#1e1e1e"/><path d="M13.5 2.2 V12.2" stroke="#1e1e1e" stroke-width="1.4"/><path d="M11.2 4 L13.5 1 L15.8 4 Z M11.2 10.6 L13.5 13.6 L15.8 10.6 Z" fill="#1e1e1e"/></svg>
<div class="a t" style="left:589px;top:404.84px;font-size:12px;line-height:12px;color:#000;font-weight:normal;">Editor Settings</div>
<div class="a" style="left:676px;top:401px;width:106px;height:20px;box-sizing:border-box;border:1px solid #a9bedb;background:#e3e3e3;"></div>
<svg class="a" style="left:680px;top:404px" width="16" height="14" viewBox="0 0 16 14"><rect x="0.6" y="1" width="2.8" height="12" fill="#1e1e1e"/><rect x="4.3" y="1" width="2.8" height="12" fill="#1e1e1e"/><path d="M7.8 1.4 L10.3 0.8 L14.4 12.4 L11.9 13.2 Z" fill="#1e1e1e"/><path d="M0 3.2 H11 M0 10.8 H13.5" stroke="#9a9a9a" stroke-width="0.8"/></svg>
<div class="a t" style="left:699px;top:404.84px;font-size:12px;line-height:12px;color:#000;font-weight:normal;">View QuickRef</div>
<div class="a" style="left:59px;top:425px;width:100px;height:20px;box-sizing:border-box;border:1px solid #acacac;border-bottom:none;background:linear-gradient(#f0f0f0,#e5e5e5);"></div>
<div class="a t" style="left:64px;top:428.84px;font-size:12px;line-height:12px;color:#000;font-weight:normal;letter-spacing:-0.15px;">Strategy Settings</div>
<div class="a" style="left:158px;top:425px;width:92px;height:20px;box-sizing:border-box;border:1px solid #acacac;border-bottom:none;background:linear-gradient(#f0f0f0,#e5e5e5);"></div>
<div class="a t" style="left:165px;top:428.84px;font-size:12px;line-height:12px;color:#000;font-weight:normal;letter-spacing:-0.15px;">C# Code Editor</div>
<div class="a" style="left:348px;top:425px;width:40px;height:20px;box-sizing:border-box;border:1px solid #acacac;border-bottom:none;background:linear-gradient(#f0f0f0,#e5e5e5);"></div>
<div class="a t" style="left:353px;top:428.84px;font-size:12px;line-height:12px;color:#000;font-weight:normal;">Chart</div>
<div class="a" style="left:57px;top:444px;width:1112px;height:320px;box-sizing:border-box;border:1px solid #a0a0a0;border-right:1px solid #a0a0a0;background:#efeff3;"></div>
<div class="a" style="left:249px;top:423px;width:100px;height:22px;box-sizing:border-box;border:1px solid #acacac;border-bottom:none;background:#fff;"></div>
<div class="a t" style="left:257px;top:427.84px;font-size:12px;line-height:12px;color:#000;font-weight:normal;letter-spacing:-0.4px;">Backtest Results</div>
<div class="a t" style="left:64px;top:454.27px;font-size:11.5px;line-height:11.5px;color:#000;font-weight:bold;">Performance Visualizers</div>
<div class="a t" style="left:64px;top:468.1px;font-size:11.7px;line-height:11.7px;color:#000;font-weight:normal;">You can control which Performance Visualizers appear below in <span style="color:#0066cc;text-decoration:underline">Backtest Preferences</span>.</div>
<div class="a" style="left:66px;top:491px;width:110px;height:21px;box-sizing:border-box;border:1px solid #acacac;border-bottom:none;background:linear-gradient(#f2f2f2,#e6e6e6);"></div>
<div class="a t" style="left:92px;top:494.84px;font-size:12px;line-height:12px;color:#000;font-weight:normal;">Metrics Report</div>
<div class="a" style="left:175px;top:491px;width:100px;height:21px;box-sizing:border-box;border:1px solid #acacac;border-bottom:none;background:linear-gradient(#f2f2f2,#e6e6e6);"></div>
<div class="a t" style="left:201px;top:494.84px;font-size:12px;line-height:12px;color:#000;font-weight:normal;">Equity Curve</div>
<div class="a" style="left:274px;top:491px;width:124px;height:21px;box-sizing:border-box;border:1px solid #acacac;border-bottom:none;background:linear-gradient(#f2f2f2,#e6e6e6);"></div>
<div class="a t" style="left:301px;top:494.84px;font-size:12px;line-height:12px;color:#000;font-weight:normal;">Drawdown Curve</div>
<div class="a" style="left:397px;top:491px;width:100px;height:21px;box-sizing:border-box;border:1px solid #acacac;border-bottom:none;background:linear-gradient(#f2f2f2,#e6e6e6);"></div>
<div class="a t" style="left:423.5px;top:494.84px;font-size:12px;line-height:12px;color:#000;font-weight:normal;">Distributions</div>
<div class="a" style="left:496px;top:491px;width:121px;height:21px;box-sizing:border-box;border:1px solid #acacac;border-bottom:none;background:linear-gradient(#f2f2f2,#e6e6e6);"></div>
<div class="a t" style="left:522.5px;top:494.84px;font-size:12px;line-height:12px;color:#000;font-weight:normal;">Monthly Returns</div>
<div class="a" style="left:616px;top:491px;width:119px;height:21px;box-sizing:border-box;border:1px solid #acacac;border-bottom:none;background:linear-gradient(#f2f2f2,#e6e6e6);"></div>
<div class="a t" style="left:643px;top:494.84px;font-size:12px;line-height:12px;color:#000;font-weight:normal;"><span style="letter-spacing:-0.22px">Periodic Returns</span></div>
<div class="a" style="left:734px;top:491px;width:88px;height:21px;box-sizing:border-box;border:1px solid #acacac;border-bottom:none;background:linear-gradient(#f2f2f2,#e6e6e6);"></div>
<div class="a t" style="left:761px;top:494.84px;font-size:12px;line-height:12px;color:#000;font-weight:normal;"><span style="letter-spacing:-0.3px">By Symbol</span></div>
<div class="a" style="left:903px;top:491px;width:101px;height:21px;box-sizing:border-box;border:1px solid #acacac;border-bottom:none;background:linear-gradient(#f2f2f2,#e6e6e6);"></div>
<div class="a t" style="left:929px;top:494.84px;font-size:12px;line-height:12px;color:#000;font-weight:normal;">Rolling Profit</div>
<div class="a" style="left:1003px;top:491px;width:101px;height:21px;box-sizing:border-box;border:1px solid #acacac;border-bottom:none;background:linear-gradient(#f2f2f2,#e6e6e6);"></div>
<div class="a t" style="left:1029.5px;top:494.84px;font-size:12px;line-height:12px;color:#000;font-weight:normal;">Contribution</div>
<svg class="a" style="left:0;top:0" width="1468" height="747"><path d="M74.5 493.5 H82 L85.5 497 V508 H74.5 Z" fill="#fff" stroke="#222" stroke-width="1.2"/><path d="M82 493.5 V497 H85.5" fill="none" stroke="#222" stroke-width="1"/><path d="M76 500.5 H83.5 M76 502.5 H83.5 M76 504.5 H83.5" stroke="#222" stroke-width="1"/><path d="M182 495 V505.5 H196.5" fill="none" stroke="#1a1a1a" stroke-width="2"/><path d="M184 504.5 L185.5 496 L187.5 498.5 L189 499.5 L191 497.5 L193 499.5 L195.5 504.5 Z" fill="#006400"/><path d="M281 507 V496 H295.5" fill="none" stroke="#1a1a1a" stroke-width="2"/><path d="M283 497 H295 L294 499.5 L292.5 502.5 L290 502.5 L288.5 504 L287 503.5 L285.5 506 L283.5 503 Z" fill="#600000"/><rect x="404.0" y="503" width="1.2" height="4" fill="#8b0000"/><rect x="405.9" y="500" width="1.2" height="7" fill="#8b0000"/><rect x="407.8" y="499" width="1.2" height="8" fill="#8b0000"/><rect x="409.7" y="496" width="1.2" height="11" fill="#007000"/><rect x="411.6" y="495" width="1.2" height="12" fill="#007000"/><rect x="413.5" y="497" width="1.2" height="10" fill="#007000"/><rect x="415.4" y="500" width="1.2" height="7" fill="#007000"/><rect x="403" y="507" width="15" height="1.2" fill="#111"/><rect x="503.5" y="494.5" width="13" height="12" fill="#fff" stroke="#777" stroke-width="1"/><path d="M507.5 494.5 V506.5 M512 494.5 V506.5" stroke="#333" stroke-width="1.1"/><path d="M503.5 494.8 H516.5 M503.5 506.2 H516.5" stroke="#444" stroke-width="1"/><path d="M622.5 503.5 H637" stroke="#111" stroke-width="1.2"/><path d="M625.5 497 V503 M627.5 499 V503 M633.5 496 V503 M635.5 498.5 V503" stroke="#007000" stroke-width="1.1"/><path d="M631.5 504 V508" stroke="#600000" stroke-width="1.3"/><text x="740.5" y="499.6" font-family="Liberation Sans" font-size="6" font-weight="bold" fill="#1d4f5c" textLength="14" lengthAdjust="spacingAndGlyphs">ABC</text><path d="M740.5 500.6 H755" stroke="#1d4f5c" stroke-width="1"/><text x="740.5" y="507" font-family="Liberation Sans" font-size="6" font-weight="bold" fill="#1d4f5c" textLength="12" lengthAdjust="spacingAndGlyphs">DEF</text><path d="M908.5 502.6 H923.2" stroke="#111" stroke-width="1.1"/><path d="M913.5 502.2 L914.8 499.5 L915.8 498.6 L917.3 495.6 L918.6 498.4 L919.3 499 L920.6 497.2 L921.6 499.6 L922.4 502.2 Z" fill="#1d4f4f"/><path d="M908.8 503.4 H913 L911.6 506.7 H910.3 Z" fill="#1d5f5f"/><circle cx="1016.5" cy="501" r="7.3" fill="none" stroke="#333" stroke-width="1.1"/><path d="M1016.5 493.7 V501 H1023.8 M1016.5 501 L1021.5 506.3" fill="none" stroke="#333" stroke-width="1.1"/></svg>
<div class="a" style="left:64px;top:511px;width:1098px;height:260px;box-sizing:border-box;border:1px solid #a0a0a0;background:#f3f3f3;"></div>
<div class="a" style="left:65px;top:512px;width:1096px;height:1px;background:#ffffff;"></div>
<div class="a" style="left:821px;top:488px;width:83px;height:25px;box-sizing:border-box;border:1px solid #acacac;border-bottom:none;background:#fff;"></div>
<div class="a t" style="left:848.5px;top:493.84px;font-size:12px;line-height:12px;color:#000;font-weight:normal;">Positions</div>
<svg class="a" style="left:828px;top:494px" width="16" height="14"><line x1="1.5" y1="0.5" x2="14.5" y2="0.5" stroke="#707070" stroke-width="1"/><line x1="1.5" y1="2.1" x2="14.5" y2="2.1" stroke="#707070" stroke-width="1"/><line x1="1.5" y1="3.7" x2="14.5" y2="3.7" stroke="#707070" stroke-width="1"/><line x1="1.5" y1="5.3" x2="14.5" y2="5.3" stroke="#707070" stroke-width="1"/><line x1="1.5" y1="6.9" x2="14.5" y2="6.9" stroke="#707070" stroke-width="1"/><line x1="1.5" y1="8.5" x2="14.5" y2="8.5" stroke="#707070" stroke-width="1"/><line x1="1.5" y1="10.1" x2="14.5" y2="10.1" stroke="#707070" stroke-width="1"/><line x1="1.5" y1="11.7" x2="14.5" y2="11.7" stroke="#707070" stroke-width="1"/><line x1="1.2" y1="0" x2="1.2" y2="13" stroke="#6a6aff" stroke-width="0.8" stroke-dasharray="1 1"/></svg>
<div class="a t" style="left:75px;top:519.84px;font-size:12px;line-height:12px;color:#000;font-weight:normal;">Open Positions:</div>
<div class="a t" style="left:-162px;width:400px;text-align:right;top:519.84px;font-size:12px;line-height:12px;color:#000;font-weight:normal;">0</div>
<div class="a t" style="left:258px;top:519.84px;font-size:12px;line-height:12px;color:#000;font-weight:normal;">Open Profit:</div>
<div class="a t" style="left:15px;width:400px;text-align:right;top:519.84px;font-size:12px;line-height:12px;color:#000;font-weight:normal;">0.00</div>
<div class="a" style="left:435px;top:518px;width:160px;height:20px;box-sizing:border-box;border:1px solid #a9bedb;background:#e3e3e3;"></div>
<div class="a t" style="left:215px;width:600px;text-align:center;top:521.84px;font-size:12px;line-height:12px;color:#000;font-weight:normal;">Open Positions to Top</div>
<div class="a t" style="left:75px;top:543.84px;font-size:12px;line-height:12px;color:#000;font-weight:normal;">Total Size:</div>
<div class="a t" style="left:-162px;width:400px;text-align:right;top:543.84px;font-size:12px;line-height:12px;color:#000;font-weight:normal;">0.00</div>
<div class="a t" style="left:258px;top:543.84px;font-size:12px;line-height:12px;color:#000;font-weight:normal;">Open Profit %:</div>
<div class="a t" style="left:15px;width:400px;text-align:right;top:543.84px;font-size:12px;line-height:12px;color:#000;font-weight:normal;">0.00%</div>
<div class="a t" style="left:435px;top:543.84px;font-size:12px;line-height:12px;color:#000;font-weight:normal;">Symbol Filter:</div>
<div class="a" style="left:515px;top:542px;width:80px;height:17px;box-sizing:border-box;border:1px solid #a2a2a2;background:#fff;"></div>
<div class="a" style="left:67px;top:563px;width:1092px;height:220px;box-sizing:border-box;border:1px solid #a9c9ea;border-top-color:#5f9bd3;border-bottom:none;background:#fff;"></div>
<div class="a" style="left:71px;top:565px;width:1087px;height:19px;background:linear-gradient(#ffffff,#f4f6f9);border-top:1px solid #f0f0f0;box-sizing:border-box;"></div>
<div class="a" style="left:71px;top:584px;width:1087px;height:1px;background:#d5d5d5;"></div>
<div class="a" style="left:68px;width:62px;top:0;height:747px;overflow:hidden;"></div>
<div class="a" style="left:130px;top:565px;width:1px;height:19px;background:#e2e3e6;"></div>
<div class="a" style="left:130px;width:80px;top:0;height:747px;overflow:hidden;"></div>
<div class="a" style="left:210px;top:565px;width:1px;height:19px;background:#e2e3e6;"></div>
<div class="a" style="left:210px;width:60px;top:0;height:747px;overflow:hidden;"></div>
<div class="a" style="left:270px;top:565px;width:1px;height:19px;background:#e2e3e6;"></div>
<div class="a" style="left:270px;width:80px;top:0;height:747px;overflow:hidden;"></div>
<div class="a" style="left:350px;top:565px;width:1px;height:19px;background:#e2e3e6;"></div>
<div class="a" style="left:350px;width:80px;top:0;height:747px;overflow:hidden;"></div>
<div class="a" style="left:430px;top:565px;width:1px;height:19px;background:#e2e3e6;"></div>
<div class="a" style="left:430px;width:80px;top:0;height:747px;overflow:hidden;"></div>
<div class="a" style="left:510px;top:565px;width:1px;height:19px;background:#e2e3e6;"></div>
<div class="a" style="left:510px;width:80px;top:0;height:747px;overflow:hidden;"></div>
<div class="a" style="left:590px;top:565px;width:1px;height:19px;background:#e2e3e6;"></div>
<div class="a" style="left:590px;width:80px;top:0;height:747px;overflow:hidden;"></div>
<div class="a" style="left:670px;top:565px;width:1px;height:19px;background:#e2e3e6;"></div>
<div class="a" style="left:670px;width:80px;top:0;height:747px;overflow:hidden;"></div>
<div class="a" style="left:750px;top:565px;width:1px;height:19px;background:#e2e3e6;"></div>
<div class="a" style="left:750px;width:80px;top:0;height:747px;overflow:hidden;"></div>
<div class="a" style="left:830px;top:565px;width:1px;height:19px;background:#e2e3e6;"></div>
<div class="a" style="left:830px;width:80px;top:0;height:747px;overflow:hidden;"></div>
<div class="a" style="left:910px;top:565px;width:1px;height:19px;background:#e2e3e6;"></div>
<div class="a" style="left:910px;width:80px;top:0;height:747px;overflow:hidden;"></div>
<div class="a" style="left:990px;top:565px;width:1px;height:19px;background:#e2e3e6;"></div>
<div class="a" style="left:990px;width:60px;top:0;height:747px;overflow:hidden;"></div>
<div class="a" style="left:1050px;top:565px;width:1px;height:19px;background:#e2e3e6;"></div>
<div class="a" style="left:1050px;width:80px;top:0;height:747px;overflow:hidden;"></div>
<div class="a" style="left:1130px;top:565px;width:1px;height:19px;background:#e2e3e6;"></div>
<div class="a" style="left:1130px;width:80px;top:0;height:747px;overflow:hidden;"></div>
<div class="a" style="left:68px;top:565px;width:1090px;height:20px;overflow:hidden;">
<div class="a t" style="left:1px;width:62px;text-align:center;top:3.839999999999975px;font-size:12px;line-height:12px;">Position</div>
<div class="a t" style="left:63px;width:80px;text-align:center;top:3.839999999999975px;font-size:12px;line-height:12px;">Symbol</div>
<div class="a t" style="left:143px;width:60px;text-align:center;top:3.839999999999975px;font-size:12px;line-height:12px;">Quantity</div>
<div class="a t" style="left:203px;width:80px;text-align:center;top:3.839999999999975px;font-size:12px;line-height:12px;">Entry Date</div>
<div class="a t" style="left:283px;width:80px;text-align:center;top:3.839999999999975px;font-size:12px;line-height:12px;">Entry Price</div>
<div class="a t" style="left:363px;width:80px;text-align:center;top:3.839999999999975px;font-size:12px;line-height:12px;">Exit Date</div>
<div class="a t" style="left:443px;width:80px;text-align:center;top:3.839999999999975px;font-size:12px;line-height:12px;">Exit Price</div>
<div class="a t" style="left:523px;width:80px;text-align:center;top:3.839999999999975px;font-size:12px;line-height:12px;">Profit</div>
<div class="a t" style="left:603px;width:80px;text-align:center;top:3.839999999999975px;font-size:12px;line-height:12px;">Profit %</div>
<div class="a t" style="left:683px;width:80px;text-align:center;top:3.839999999999975px;font-size:12px;line-height:12px;">Bars Held</div>
<div class="a t" style="left:763px;width:80px;text-align:center;top:3.839999999999975px;font-size:12px;line-height:12px;">Entry Signal</div>
<div class="a t" style="left:843px;width:80px;text-align:center;top:3.839999999999975px;font-size:12px;line-height:12px;">Exit Signal</div>
<div class="a t" style="left:923px;width:60px;text-align:center;top:3.839999999999975px;font-size:12px;line-height:12px;">Tag</div>
<div class="a t" style="left:983px;width:80px;text-align:center;top:3.839999999999975px;font-size:12px;line-height:12px;">MFE %</div>
<div class="a t" style="left:1063px;width:80px;text-align:center;top:3.839999999999975px;font-size:12px;line-height:12px;">MAE %</div>
</div>
<svg class="a" style="left:76px;top:586px;" width="16" height="16" viewBox="0 0 16 16"><path d="M7.5 3.5 L13.6 13.6 H1.4 Z" fill="#d2d2f8" stroke="#2424ff" stroke-width="1.3"/></svg>
<div class="a t" style="left:95px;top:588.84px;font-size:12px;line-height:12px;color:#141c86;font-weight:normal;">Long</div>
<div class="a t" style="left:137px;top:588.84px;font-size:12px;line-height:12px;color:#141c86;font-weight:normal;">AAPL</div>
<div class="a t" style="left:-135px;width:400px;text-align:right;top:588.84px;font-size:12px;line-height:12px;color:#141c86;font-weight:normal;">82</div>
<div class="a t" style="left:-55px;width:400px;text-align:right;top:588.84px;font-size:12px;line-height:12px;color:#141c86;font-weight:normal;">2/26/2021</div>
<div class="a t" style="left:25px;width:400px;text-align:right;top:588.84px;font-size:12px;line-height:12px;color:#141c86;font-weight:normal;">122.61</div>
<div class="a t" style="left:105px;width:400px;text-align:right;top:588.84px;font-size:12px;line-height:12px;color:#141c86;font-weight:normal;">3/11/2021</div>
<div class="a t" style="left:185px;width:400px;text-align:right;top:588.84px;font-size:12px;line-height:12px;color:#141c86;font-weight:normal;">121.96</div>
<div class="a t" style="left:265px;width:400px;text-align:right;top:588.84px;font-size:12px;line-height:12px;color:#ff0000;font-weight:normal;">-53.30</div>
<div class="a t" style="left:345px;width:400px;text-align:right;top:588.84px;font-size:12px;line-height:12px;color:#ff0000;font-weight:normal;">-0.53</div>
<div class="a t" style="left:425px;width:400px;text-align:right;top:588.84px;font-size:12px;line-height:12px;color:#141c86;font-weight:normal;">10</div>
<div class="a t" style="left:725px;width:400px;text-align:right;top:588.84px;font-size:12px;line-height:12px;color:#008000;font-weight:normal;">4.98</div>
<svg class="a" style="left:0;top:0" width="1468" height="747"><ellipse cx="1245.7" cy="241.7" rx="40" ry="34.4" fill="none" stroke="#e31b23" stroke-width="4.2" transform="rotate(-6 1245.7 241.7)"/><ellipse cx="646.5" cy="587" rx="52.5" ry="43" fill="none" stroke="#e31b23" stroke-width="5" transform="rotate(4 646.5 587)"/><path d="M681 528.5 C683.3 525.6 690.8 516.9 694.7 511.1 C698.6 505.3 701.5 499.6 704.6 493.8 C707.7 488.0 710.4 481.5 713.3 476.5 C716.2 471.5 718.5 469.8 722 464 C725.5 458.2 730.6 448.4 734.3 441.8 C738.0 435.2 741.7 429.8 744.2 424.4 C746.7 419.0 746.7 415.4 749.2 409.6 C751.7 403.8 755.8 396.3 759.1 389.7 C762.4 383.1 766.4 374.6 769 369.9 C771.6 365.2 772.2 364.8 774.8 361.3 C777.4 357.8 781.3 352.9 784.6 349 C787.9 345.1 791.2 341.4 794.5 337.9 C797.8 334.4 801.0 331.5 804.3 328 C807.6 324.5 810.7 320.3 814.2 316.9 C817.7 313.5 821.2 310.3 825.3 307.7 C829.4 305.1 834.1 303.0 838.8 301.5 C843.5 300.0 849.5 299.7 853.6 298.5 C857.7 297.3 858.5 295.6 863.4 294.2 C868.3 292.8 875.4 291.2 883.1 289.9 C890.8 288.5 901.8 287.9 909.4 286.1 C917.0 284.3 921.2 281.4 929 279 C936.8 276.6 948.1 274.2 956.3 272 C964.5 269.8 970.7 268.4 978 266 C985.3 263.6 992.8 260.2 999.9 257.8 C1007.0 255.4 1012.9 252.9 1020.6 251.3 C1028.3 249.7 1038.5 249.0 1046 248.3 C1053.5 247.6 1059.7 247.0 1065.6 247.1 C1071.5 247.2 1076.0 248.2 1081.5 248.9 C1087.0 249.6 1088.9 251.0 1098.7 251.4 C1108.5 251.8 1128.7 251.2 1140.3 251.1 C1151.9 251.0 1159.4 250.6 1168.5 250.7 C1177.6 250.8 1190.5 251.3 1194.9 251.4" fill="none" stroke="#e31b23" stroke-width="3.6" stroke-linecap="round" stroke-linejoin="round"/><path d="M1147.7 229.9 C1150.8 231.1 1159.0 234.2 1166 237.3 C1173.0 240.4 1184.6 246.0 1189.4 248.3 C1194.2 250.7 1194.1 250.9 1195 251.4" fill="none" stroke="#e31b23" stroke-width="3.6" stroke-linecap="round"/><path d="M1195 251.4 C1193.9 252.5 1191.6 255.4 1188.2 258.1 C1184.8 260.9 1179.3 264.4 1174.7 267.9 C1170.1 271.4 1162.9 277.1 1160.6 279" fill="none" stroke="#e31b23" stroke-width="3.6" stroke-linecap="round"/><path d="M673.6 463.6 C674.2 468.6 676.1 483.0 677.3 493.8 C678.5 504.6 680.4 522.7 681 528.5" fill="none" stroke="#e31b23" stroke-width="3.4" stroke-linecap="round"/><path d="M681 528.5 C684.9 528.7 697.0 528.7 704.6 529.7 C712.2 530.7 720.9 534.6 726.9 534.7 C732.9 534.8 738.2 531.2 740.5 530.5" fill="none" stroke="#e31b23" stroke-width="3.4" stroke-linecap="round"/></svg>
</body></html>
